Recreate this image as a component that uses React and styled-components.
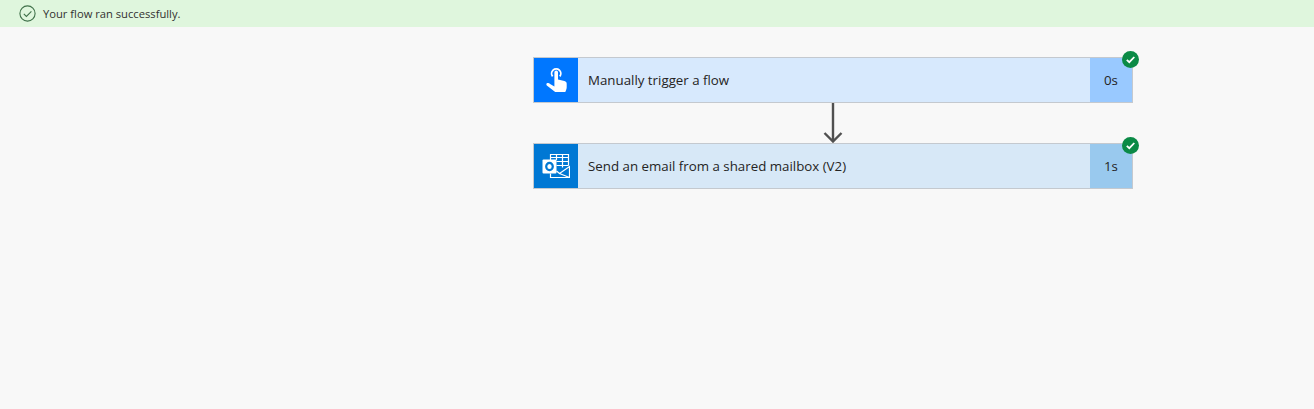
import React from 'react';
import styled, { createGlobalStyle } from 'styled-components';

const GlobalStyle = createGlobalStyle`
    html, body {
        margin: 0;
        height: 100%;
        background: #f8f8f8;
        font-family: "Open Sans", "Noto Sans", "Liberation Sans", sans-serif;
        color: #252423;
    }
`;

const Page = styled.div`
    min-height: 409px;
    background: #f8f8f8;
`;

const Banner = styled.div`
    height: 27px;
    box-sizing: border-box;
    padding-left: 19px;
    display: flex;
    align-items: center;
    gap: 7px;
    background: #dff6dd;
    font-size: 11.2px;
    color: #323130;
`;

const Flow = styled.div`
    width: 600px;
    margin-left: 533px;
    padding-top: 30px;
    display: flex;
    flex-direction: column;
`;

const Card = styled.div`
    position: relative;
    height: 46px;
    box-sizing: border-box;
    display: flex;
    align-items: stretch;
    border: 1px solid #c4c9cf;
    background: ${p => p.$bg};
`;

const IconBox = styled.div`
    width: 44px;
    flex: none;
    display: flex;
    align-items: center;
    justify-content: center;
    background: ${p => p.$bg};
`;

const Title = styled.div`
    flex: 1;
    display: flex;
    align-items: center;
    padding-left: 10px;
    font-size: 13.3px;
    color: #252423;
`;

const Duration = styled.div`
    width: 42px;
    flex: none;
    display: flex;
    align-items: center;
    justify-content: center;
    font-size: 13.3px;
    background: ${p => p.$bg};
`;

const Badge = styled.div`
    position: absolute;
    top: -7px;
    right: -7px;
    width: 17px;
    height: 17px;
    border-radius: 50%;
    background: #0b8a46;
    display: flex;
    align-items: center;
    justify-content: center;
`;

const Connector = styled.div`
    height: 40px;
    display: flex;
    justify-content: center;
`;

const CheckCircle = () => (
    <svg width="17" height="17" viewBox="0 0 17 17" fill="none" stroke="#3f7049" strokeWidth="1.1">
        <circle cx="8.5" cy="8.5" r="7.6" />
        <path d="M4.8 8.8l2.6 2.6 5-5" />
    </svg>
);

const TouchIcon = () => (
    <svg width="24" height="28" viewBox="0 0 24 28">
        <path
            fill="none"
            stroke="#fff"
            strokeWidth="1.8"
            d="M8.6 10.4a4.6 4.6 0 1 1 7.2 0"
        />
        <path
            fill="#fff"
            d="M10.4 6.2a1.8 1.8 0 0 1 3.600 0v7.300l6.400 1.500c1.500.4 2.300 1.300 2.300 2.800v3.400c0 .9-.2 1.700-.5 2.500l-.9 2.300H11.200L2.800 19.500c-.8-1-.4-2.100.6-2.400 1-.3 1.900.1 2.700.8l4.300 2.600z"
        />
    </svg>
);

const OutlookIcon = () => (
    <svg width="28" height="26" viewBox="0 0 28 26" fill="none">
        <path
            stroke="#fff"
            strokeWidth="1.2"
            d="M8.500 7V1.500h18v11M14.500 1.500v5.500M20.500 1.500v13M8.500 4.500h18M14.500 8.500h12M14.500 12.500h12"
        />
        <rect x="0.500" y="6.500" width="14" height="14" rx="1" fill="#fff" />
        <ellipse cx="7.500" cy="13.500" rx="3.300" ry="3.700" stroke="#0078d4" strokeWidth="2.200" />
        <path
            stroke="#fff"
            strokeWidth="1.2"
            d="M8.500 20.500v4h19v-11l-10 7-3-2.500M17.500 20.500l10 4"
        />
    </svg>
);

const SmallCheck = () => (
    <svg width="11" height="11" viewBox="0 0 11 11" fill="none" stroke="#fff" strokeWidth="1.8">
        <path d="M1.800 5.800l2.500 2.400 5-5.200" />
    </svg>
);

const ArrowDown = () => (
    <svg width="20" height="40" viewBox="0 0 20 40" fill="none" stroke="#505050" strokeWidth="2.400">
        <path d="M10 0v38M1.500 30l8.500 8.500 8.500-8.500" />
    </svg>
);

const steps = [
    {
        title: 'Manually trigger a flow',
        time: '0s',
        icon: <TouchIcon />,
        iconBg: '#0077ff',
        cardBg: '#d7e9fd',
        timeBg: '#99c9ff',
    },
    {
        title: 'Send an email from a shared mailbox (V2)',
        time: '1s',
        icon: <OutlookIcon />,
        iconBg: '#0078d4',
        cardBg: '#d7e8f7',
        timeBg: '#99c9ee',
    },
];

const App = () => {
    return (
        <Page>
            <GlobalStyle />
            <Banner>
                <CheckCircle />
                Your flow ran successfully.
            </Banner>
            <Flow>
                {steps.map((step, index) => (
                    <React.Fragment key={step.title}>
                        {index > 0 && (
                            <Connector>
                                <ArrowDown />
                            </Connector>
                        )}
                        <Card $bg={step.cardBg}>
                            <IconBox $bg={step.iconBg}>{step.icon}</IconBox>
                            <Title>{step.title}</Title>
                            <Duration $bg={step.timeBg}>{step.time}</Duration>
                            <Badge>
                                <SmallCheck />
                            </Badge>
                        </Card>
                    </React.Fragment>
                ))}
            </Flow>
        </Page>
    );
};

export default App;
